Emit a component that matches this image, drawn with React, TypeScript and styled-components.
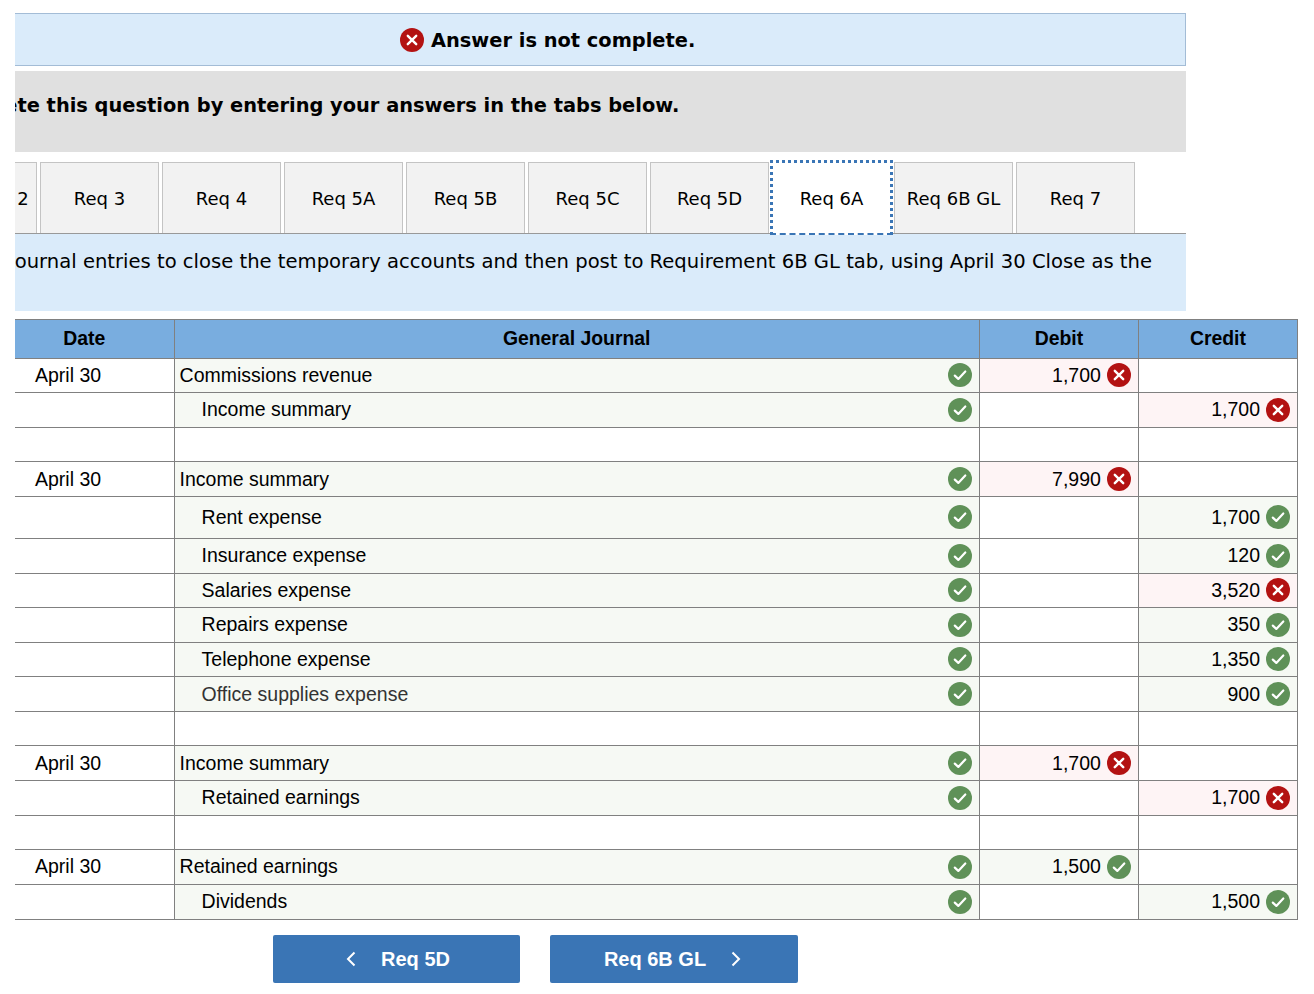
import React from "react";
import styled, { createGlobalStyle } from "styled-components";

const GlobalStyle = createGlobalStyle`
    html, body {
        margin: 0;
        padding: 0;
        background: #fff;
    }
`

const Page = styled.div`
    width: 1283px;
    margin-left: 15px;
    padding-top: 13px;
    overflow: hidden;
    font-family: "DejaVu Sans", Verdana, sans-serif;
    color: #000;
`

const Alert = styled.div`
    box-sizing: border-box;
    width: 1171px;
    height: 53px;
    display: flex;
    align-items: center;
    padding-left: 385px;
    gap: 7px;
    background: #daebfa;
    border-top: 1px solid #a3bcd6;
    border-bottom: 1px solid #a3bcd6;
    border-right: 1px solid #a3bcd6;
    font-size: 19.4px;
    font-weight: 700;
`

const AlertText = styled.span`
    padding-top: 2px;
`

const Prompt = styled.div`
    box-sizing: border-box;
    width: 1171px;
    height: 81px;
    margin-top: 5px;
    padding-top: 23px;
    background: #e0e0e0;
    font-size: 19.4px;
    font-weight: 700;
    line-height: 24px;
    white-space: nowrap;
    overflow: hidden;
`

const PromptText = styled.span`
    display: inline-block;
    margin-left: -79px;
`

const Tabs = styled.div`
    display: flex;
    gap: 3px;
    height: 71px;
    margin-top: 10px;
    margin-left: -46px;
`

const Tab = styled.div<{ $active?: boolean; $narrow?: boolean }>`
    box-sizing: border-box;
    flex: none;
    width: ${({ $active, $narrow }) => ($active ? "123px" : $narrow ? "68px" : "119px")};
    height: ${({ $active }) => ($active ? "75px" : "71px")};
    margin: ${({ $active }) => ($active ? "-2px -2px 0" : "0")};
    display: flex;
    align-items: center;
    justify-content: center;
    background: ${({ $active }) => ($active ? "#fff" : "#f2f2f2")};
    border: ${({ $active }) => ($active ? "3px dotted #3a75b5" : "1px solid #c4c4c4")};
    border-bottom: ${({ $active }) => ($active ? "2px dashed #3a75b5" : "none")};
    font-size: 18px;
    white-space: nowrap;
    position: relative;
    z-index: ${({ $active }) => ($active ? 1 : 0)};
`

const Instruction = styled.div`
    box-sizing: border-box;
    width: 1171px;
    height: 78px;
    padding-top: 15px;
    background: #daebfa;
    border-top: 1px solid #999;
    font-size: 19.58px;
    line-height: 26px;
    white-space: nowrap;
    overflow: hidden;
`

const InstructionText = styled.span`
    display: inline-block;
    margin-left: -125.5px;
`

const Table = styled.table`
    width: 1283px;
    margin-top: 8px;
    table-layout: fixed;
    border-collapse: collapse;
    font-family: "Liberation Sans", Arial, sans-serif;
    font-size: 19.5px;
    color: #000;
`

const HeadCell = styled.th`
    height: 37px;
    padding: 0 0 1px;
    background: #79addf;
    border: 1px solid #808080;
    font-size: 19.4px;
    font-weight: 700;
    &:first-child {
        border-left: none;
        padding-right: 20px;
    }
`

const BodyRow = styled.tr<{ $height: number }>`
    height: ${({ $height }) => $height}px;
`

const BodyCell = styled.td<{ $state?: "ok" | "bad"; $lift?: boolean }>`
    padding: 0 0 ${({ $lift }) => ($lift ? "1px" : "0")};
    border: 1px solid #808080;
    background: ${({ $state }) => ($state === "ok" ? "#f6f9f4" : $state === "bad" ? "#fef4f5" : "#fff")};
    &:first-child {
        border-left: none;
    }
`

const DateText = styled.div`
    padding-left: 20px;
`

const Account = styled.div<{ $indent?: boolean; $muted?: boolean }>`
    display: flex;
    align-items: center;
    justify-content: space-between;
    padding-left: ${({ $indent }) => ($indent ? "27px" : "5px")};
    padding-right: 7px;
    color: ${({ $muted }) => ($muted ? "#333" : "inherit")};
`

const Amount = styled.div`
    display: flex;
    align-items: center;
    justify-content: flex-end;
    gap: 6px;
    padding-right: 7px;
`

const Buttons = styled.div`
    display: flex;
    gap: 30px;
    margin-top: 15px;
    margin-left: 258px;
    padding-bottom: 11px;
`

const NavButton = styled.button<{ $next?: boolean }>`
    width: ${({ $next }) => ($next ? "248px" : "247px")};
    height: 48px;
    display: flex;
    align-items: center;
    justify-content: center;
    gap: 24px;
    padding: ${({ $next }) => ($next ? "0 2px 0 0" : "0 0 0 2px")};
    background: #3a75b5;
    border: none;
    border-radius: 2px;
    color: #fff;
    font-family: "Liberation Sans", Arial, sans-serif;
    font-size: 20px;
    font-weight: 700;
`

const Mark = ({ ok }: { ok: boolean }) => (
    <svg width="24" height="24" viewBox="0 0 24 24" style={{ flex: "none", display: "block" }}>
        <circle cx="12" cy="12" r="12" fill={ok ? "#5f9158" : "#b31212"} />
        {ok
            ? <path d="M6.8 12.6l3.5 3.3 7-7.4" fill="none" stroke="#fff" strokeWidth="2.2" strokeLinecap="round" strokeLinejoin="round" />
            : <path d="M7.8 7.8l8.4 8.4M16.2 7.8l-8.4 8.4" fill="none" stroke="#fff" strokeWidth="2.4" strokeLinecap="round" />}
    </svg>
);

const Chevron = ({ right }: { right?: boolean }) => (
    <svg width="12" height="18" viewBox="0 0 12 18">
        <path d={right ? "M2.5 2.5L9 9l-6.5 6.5" : "M9.5 2.5L3 9l6.5 6.5"} fill="none" stroke="#fff" strokeWidth="2" />
    </svg>
);

type Row = {
    height: number;
    lift?: boolean;
    date?: string;
    account?: string;
    indent?: boolean;
    muted?: boolean;
    debit?: [string, boolean];
    credit?: [string, boolean];
};

const rows: Row[] = [
    { height: 34, lift: true, date: "April 30", account: "Commissions revenue", debit: ["1,700", false] },
    { height: 35, lift: true, account: "Income summary", indent: true, credit: ["1,700", false] },
    { height: 34 },
    { height: 35, date: "April 30", account: "Income summary", debit: ["7,990", false] },
    { height: 42, lift: true, account: "Rent expense", indent: true, credit: ["1,700", true] },
    { height: 35, lift: true, account: "Insurance expense", indent: true, credit: ["120", true] },
    { height: 34, lift: true, account: "Salaries expense", indent: true, credit: ["3,520", false] },
    { height: 35, lift: true, account: "Repairs expense", indent: true, credit: ["350", true] },
    { height: 34, lift: true, account: "Telephone expense", indent: true, credit: ["1,350", true] },
    { height: 35, account: "Office supplies expense", indent: true, muted: true, credit: ["900", true] },
    { height: 34 },
    { height: 35, date: "April 30", account: "Income summary", debit: ["1,700", false] },
    { height: 35, lift: true, account: "Retained earnings", indent: true, credit: ["1,700", false] },
    { height: 34 },
    { height: 35, lift: true, date: "April 30", account: "Retained earnings", debit: ["1,500", true] },
    { height: 35, lift: true, account: "Dividends", indent: true, credit: ["1,500", true] },
];

const tabs = ["Req 2", "Req 3", "Req 4", "Req 5A", "Req 5B", "Req 5C", "Req 5D", "Req 6A", "Req 6B GL", "Req 7"];

const MoneyCell = ({ value, lift }: { value?: [string, boolean]; lift?: boolean }) => (
    <BodyCell $lift={lift} $state={value ? (value[1] ? "ok" : "bad") : undefined}>
        {value && (
            <Amount>
                {value[0]}
                <Mark ok={value[1]} />
            </Amount>
        )}
    </BodyCell>
);

export default function App() {
    return (
        <Page>
            <GlobalStyle />
            <Alert>
                <Mark ok={false} />
                <AlertText>Answer is not complete.</AlertText>
            </Alert>
            <Prompt>
                <PromptText>Complete this question by entering your answers in the tabs below.</PromptText>
            </Prompt>
            <Tabs>
                {tabs.map((t) => (
                    <Tab key={t} $active={t === "Req 6A"} $narrow={t === "Req 2"}>{t}</Tab>
                ))}
            </Tabs>
            <Instruction>
                <InstructionText>Prepare the journal entries to close the temporary accounts and then post to Requirement 6B GL tab, using April 30 Close as the</InstructionText>
            </Instruction>
            <Table>
                <colgroup>
                    <col style={{ width: 159 }} />
                    <col style={{ width: 805 }} />
                    <col style={{ width: 159 }} />
                    <col style={{ width: 159 }} />
                </colgroup>
                <thead>
                    <tr>
                        <HeadCell>Date</HeadCell>
                        <HeadCell>General Journal</HeadCell>
                        <HeadCell>Debit</HeadCell>
                        <HeadCell>Credit</HeadCell>
                    </tr>
                </thead>
                <tbody>
                    {rows.map((r, i) => (
                        <BodyRow key={i} $height={r.height}>
                            <BodyCell $lift={r.lift}>{r.date && <DateText>{r.date}</DateText>}</BodyCell>
                            <BodyCell $lift={r.lift} $state={r.account ? "ok" : undefined}>
                                {r.account && (
                                    <Account $indent={r.indent} $muted={r.muted}>
                                        {r.account}
                                        <Mark ok />
                                    </Account>
                                )}
                            </BodyCell>
                            <MoneyCell value={r.debit} lift={r.lift} />
                            <MoneyCell value={r.credit} lift={r.lift} />
                        </BodyRow>
                    ))}
                </tbody>
            </Table>
            <Buttons>
                <NavButton>
                    <Chevron />
                    Req 5D
                </NavButton>
                <NavButton $next>
                    Req 6B GL
                    <Chevron right />
                </NavButton>
            </Buttons>
        </Page>
    );
}
